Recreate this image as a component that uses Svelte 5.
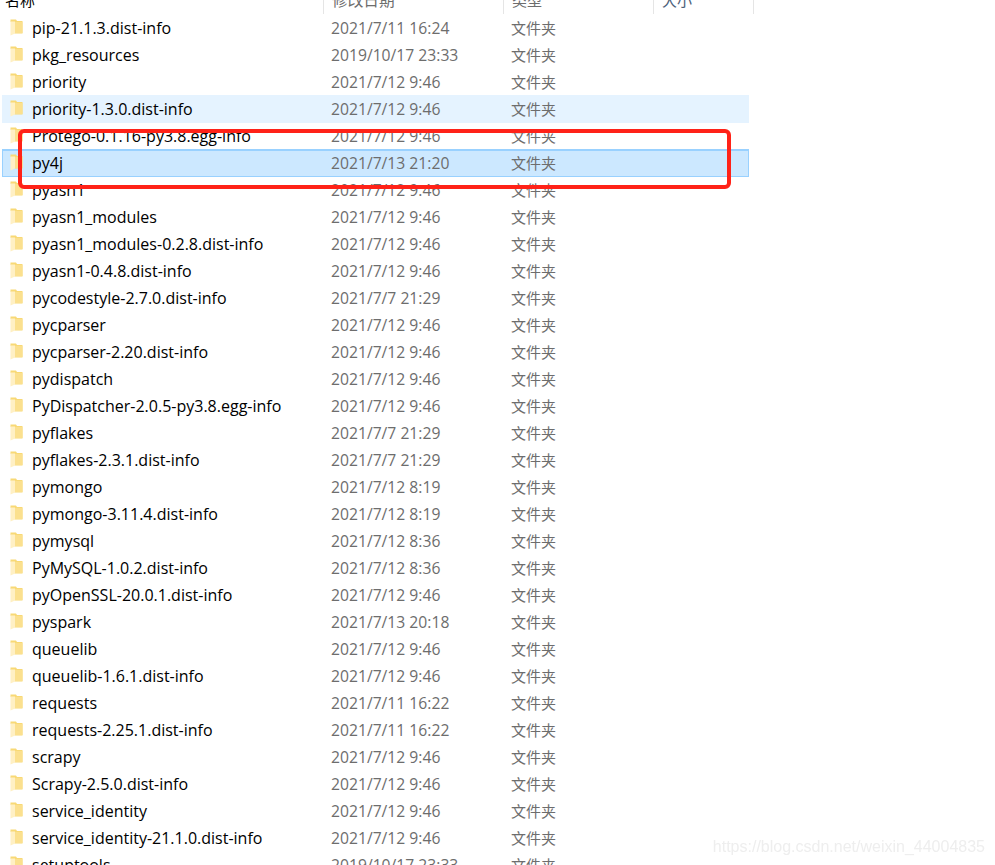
<script>
  const d0712 = '2021/7/12 9:46'
  const rows = [
    ['pip-21.1.3.dist-info', '2021/7/11 16:24'],
    ['pkg_resources', '2019/10/17 23:33'],
    ['priority', d0712],
    ['priority-1.3.0.dist-info', d0712, 'hover'],
    ['Protego-0.1.16-py3.8.egg-info', d0712],
    ['py4j', '2021/7/13 21:20', 'selected'],
    ['pyasn1', d0712],
    ['pyasn1_modules', d0712],
    ['pyasn1_modules-0.2.8.dist-info', d0712],
    ['pyasn1-0.4.8.dist-info', d0712],
    ['pycodestyle-2.7.0.dist-info', '2021/7/7 21:29'],
    ['pycparser', d0712],
    ['pycparser-2.20.dist-info', d0712],
    ['pydispatch', d0712],
    ['PyDispatcher-2.0.5-py3.8.egg-info', d0712],
    ['pyflakes', '2021/7/7 21:29'],
    ['pyflakes-2.3.1.dist-info', '2021/7/7 21:29'],
    ['pymongo', '2021/7/12 8:19'],
    ['pymongo-3.11.4.dist-info', '2021/7/12 8:19'],
    ['pymysql', '2021/7/12 8:36'],
    ['PyMySQL-1.0.2.dist-info', '2021/7/12 8:36'],
    ['pyOpenSSL-20.0.1.dist-info', d0712],
    ['pyspark', '2021/7/13 20:18'],
    ['queuelib', d0712],
    ['queuelib-1.6.1.dist-info', d0712],
    ['requests', '2021/7/11 16:22'],
    ['requests-2.25.1.dist-info', '2021/7/11 16:22'],
    ['scrapy', d0712],
    ['Scrapy-2.5.0.dist-info', d0712],
    ['service_identity', d0712],
    ['service_identity-21.1.0.dist-info', d0712],
    ['setuptools', '2019/10/17 23:33']
  ]
</script>

<div class="page">
  <div class="head">
    <div class="hcell name">名称</div>
    <div class="hcell date">修改日期</div>
    <div class="hcell type">类型</div>
    <div class="hcell size">大小</div>
  </div>

  {#each rows as row}
    <div class="row {row[2] || ''}">
      <svg class="folder" width="13" height="17" viewBox="0 0 13 17">
        <path d="M0.5 0.5H6L7 2H12.5V14.5H4.5V3H0.5Z" fill="#f8d976" />
        <path d="M5 3H12.5V14H5Z" fill="#fbe08e" />
        <path d="M0.5 2.5H5V14.5L0.5 16.5Z" fill="#fff0c4" />
      </svg>
      <span class="name">{row[0]}</span>
      <span class="date">{row[1]}</span>
      <span class="type">文件夹</span>
    </div>
  {/each}

  <div class="mark"></div>
  <div class="watermark">https://blog.csdn.net/weixin_44004835</div>
</div>

<style>
  :global(body) {
    margin: 0;
    background: #fff;
  }

  .page {
    position: relative;
    width: 995px;
    height: 865px;
    overflow: hidden;
    background: #fff;
    font-family: "Open Sans", "Noto Sans CJK SC", sans-serif;
    font-size: 16px;
  }

  .head {
    display: flex;
    height: 15px;
    padding-left: 3px;
  }

  .hcell {
    box-sizing: border-box;
    height: 14px;
    line-height: 0;
    font-size: 15px;
    color: #4c607a;
    padding-left: 2px;
    border-right: 1px solid #e5e5e5;
    overflow: hidden;
    white-space: nowrap;
  }

  .hcell.name { width: 321px; }
  .hcell.date { width: 180px; padding-left: 8px; }
  .hcell.type { width: 150px; padding-left: 8px; }
  .hcell.size { width: 100px; padding-left: 8px; }

  .row {
    display: flex;
    align-items: center;
    box-sizing: border-box;
    width: 747px;
    height: 27px;
    padding-bottom: 2px;
    margin-left: 2px;
    white-space: nowrap;
  }

  .row.hover {
    background: #e5f3ff;
    box-shadow: 0 -1px 0 #e5f3ff;
  }

  .row.selected {
    background: #cce8ff;
    outline: 1px solid #99d1ff;
    outline-offset: -1px;
    box-shadow: 0 -1px 0 #99d1ff;
  }

  .folder {
    flex: none;
    margin-left: 8px;
    margin-right: 9px;
  }

  .name {
    width: 299px;
    color: #000;
  }

  .date {
    width: 180px;
    color: #6d6d6d;
    font-size: 15.7px;
  }

  .type {
    color: #6d6d6d;
    font-size: 15px;
  }

  /* red annotation drawn over the list */
  .mark {
    position: absolute;
    left: 18px;
    top: 129px;
    width: 705px;
    height: 52px;
    border: 4px solid #ff2218;
    border-radius: 6px;
  }

  .watermark {
    position: absolute;
    right: 10px;
    top: 838px;
    color: #eeeeee;
    font-family: "Liberation Sans", sans-serif;
    font-size: 16px;
    filter: blur(0.4px);
  }
</style>
